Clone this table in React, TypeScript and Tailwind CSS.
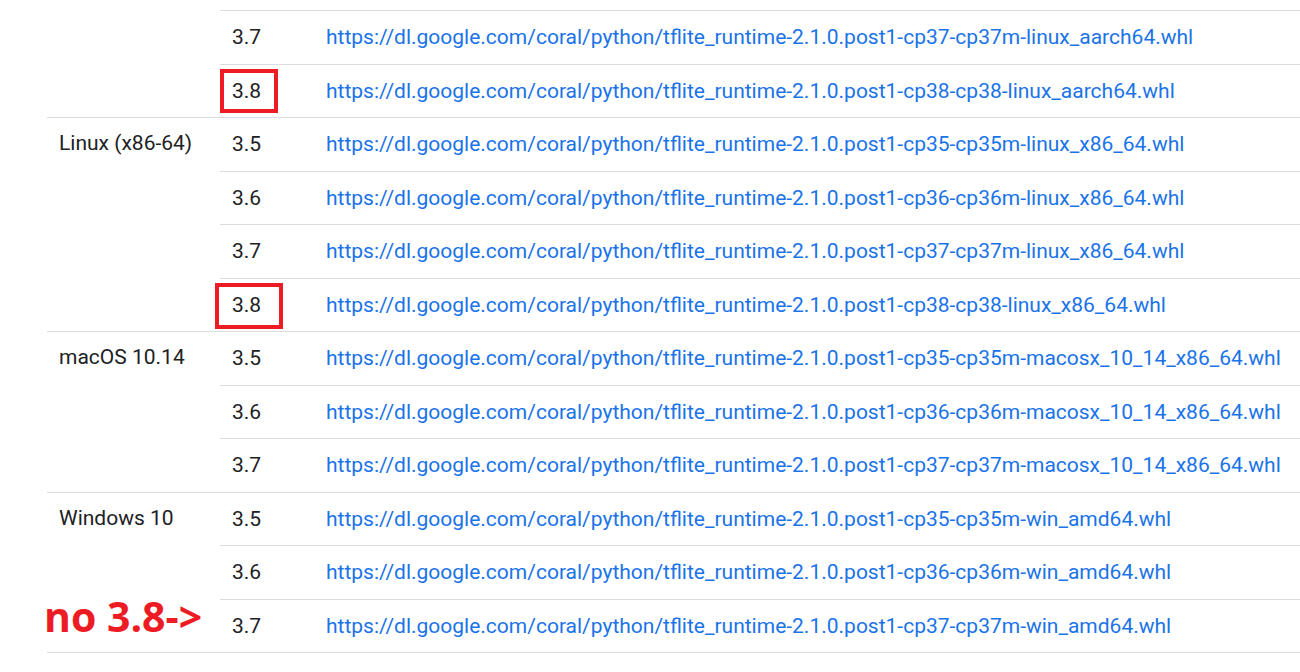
import React from 'react';

type Row = { py: string; file: string; mark?: 'a' | 'b' };
type Group = { os: string; rows: Row[]; hideTop?: boolean };

const BASE = 'https://dl.google.com/coral/python/tflite_runtime-2.1.0.post1-';

const groups: Group[] = [
  {
    os: '',
    hideTop: true,
    rows: [
      { py: '3.7', file: 'cp37-cp37m-linux_aarch64.whl' },
      { py: '3.8', file: 'cp38-cp38-linux_aarch64.whl', mark: 'a' },
    ],
  },
  {
    os: 'Linux (x86-64)',
    rows: [
      { py: '3.5', file: 'cp35-cp35m-linux_x86_64.whl' },
      { py: '3.6', file: 'cp36-cp36m-linux_x86_64.whl' },
      { py: '3.7', file: 'cp37-cp37m-linux_x86_64.whl' },
      { py: '3.8', file: 'cp38-cp38-linux_x86_64.whl', mark: 'b' },
    ],
  },
  {
    os: 'macOS 10.14',
    rows: [
      { py: '3.5', file: 'cp35-cp35m-macosx_10_14_x86_64.whl' },
      { py: '3.6', file: 'cp36-cp36m-macosx_10_14_x86_64.whl' },
      { py: '3.7', file: 'cp37-cp37m-macosx_10_14_x86_64.whl' },
    ],
  },
  {
    os: 'Windows 10',
    rows: [
      { py: '3.5', file: 'cp35-cp35m-win_amd64.whl' },
      { py: '3.6', file: 'cp36-cp36m-win_amd64.whl' },
      { py: '3.7', file: 'cp37-cp37m-win_amd64.whl' },
    ],
  },
];

const line = 'border-t border-[#dadce0]';

export default function App() {
  return (
    <div className="relative w-[1300px] h-[672px] overflow-hidden bg-white pt-[10px] font-['Roboto',sans-serif] text-[21px] leading-[26px] text-[#202124]">
      <table className="ml-[47px] w-[1253px] border-collapse">
        <tbody>
          {groups.map((g, gi) =>
            g.rows.map((r, ri) => (
              <tr key={`${gi}-${ri}`} className="h-[53.5px]">
                {ri === 0 && (
                  <td
                    rowSpan={g.rows.length}
                    className={`w-[173px] align-top pl-[12px] pt-[12px] ${g.hideTop ? '' : line}`}
                  >
                    {g.os}
                  </td>
                )}
                <td className={`w-[94px] pl-[12px] ${line}`}>
                  <span className="relative">
                    {r.py}
                    {r.mark === 'a' && (
                      <span className="absolute left-[-12px] top-[-10px] w-[58px] h-[44px] border-[4px] border-[#ed1c24]" />
                    )}
                    {r.mark === 'b' && (
                      <span className="absolute left-[-17px] top-[-10px] w-[68px] h-[46px] border-[4px] border-[#ed1c24]" />
                    )}
                  </span>
                </td>
                <td className={`pl-[12px] whitespace-nowrap ${line}`}>
                  <a className="text-[#1a73e8]" href="#">
                    {BASE + r.file}
                  </a>
                </td>
              </tr>
            ))
          )}
          <tr>
            <td colSpan={3} className={line} />
          </tr>
        </tbody>
      </table>
      <div className="absolute left-[44px] top-[590px] font-['Open_Sans',sans-serif] font-bold text-[41px] leading-[52px] text-[#ed1c24]">
        no 3.8-&gt;
      </div>
    </div>
  );
}
